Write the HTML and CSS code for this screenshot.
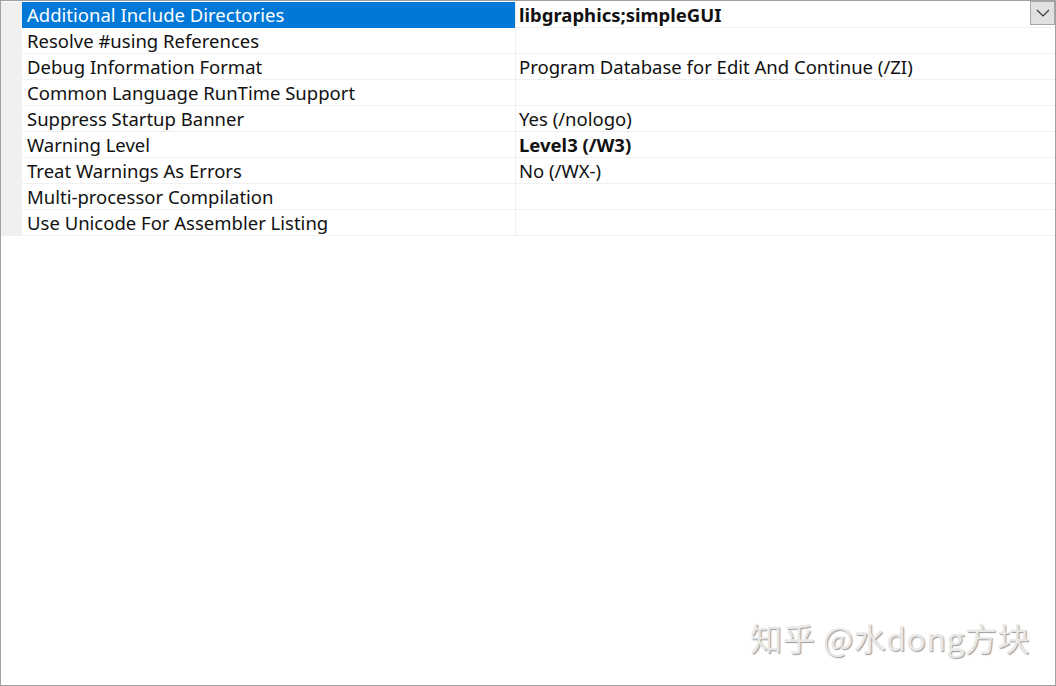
FILE: index.html
```html
<!DOCTYPE html>
<html>
<head>
<meta charset="utf-8">
<link rel="stylesheet" href="styles.css">
</head>
<body>
<div class="frame">
  <div class="grid">
    <div class="row selected">
      <div class="gutter"></div>
      <div class="name">Additional Include Directories</div>
      <div class="value bold with-btn"><span>libgraphics;simpleGUI</span>
        <span class="dd"><svg width="14" height="8" viewBox="0 0 14 8"><path d="M1 1 L7 7 L13 1" fill="none" stroke="#333" stroke-width="1.1"/></svg></span>
      </div>
    </div>
    <div class="row"><div class="gutter"></div><div class="name">Resolve #using References</div><div class="value"></div></div>
    <div class="row"><div class="gutter"></div><div class="name">Debug Information Format</div><div class="value">Program Database for Edit And Continue (/ZI)</div></div>
    <div class="row"><div class="gutter"></div><div class="name">Common Language RunTime Support</div><div class="value"></div></div>
    <div class="row"><div class="gutter"></div><div class="name">Suppress Startup Banner</div><div class="value">Yes (/nologo)</div></div>
    <div class="row"><div class="gutter"></div><div class="name">Warning Level</div><div class="value bold">Level3 (/W3)</div></div>
    <div class="row"><div class="gutter"></div><div class="name">Treat Warnings As Errors</div><div class="value">No (/WX-)</div></div>
    <div class="row"><div class="gutter"></div><div class="name">Multi-processor Compilation</div><div class="value"></div></div>
    <div class="row"><div class="gutter"></div><div class="name">Use Unicode For Assembler Listing</div><div class="value"></div></div>
  </div>
  <div class="watermark">知乎 @水dong方块</div>
</div>
</body>
</html>
```
FILE: styles.css
```css
html, body {
  margin: 0;
  padding: 0;
  background: #ffffff;
}
.frame {
  position: relative;
  width: 1056px;
  height: 686px;
  box-sizing: border-box;
  border: 1px solid #a0a0a0;
  padding-top: 1px;
  font-family: "Noto Sans", "Noto Sans CJK SC", sans-serif;
  font-size: 18.5px;
  color: #111111;
  overflow: hidden;
}
.grid {
  display: flex;
  flex-direction: column;
}
.row {
  display: grid;
  grid-template-columns: 21px 494px 1fr;
  height: 26px;
  box-sizing: border-box;
  border-bottom: 1px solid #f0f0f0;
}
.gutter {
  background: #f0f0f0;
}
.name {
  padding-left: 5px;
  line-height: 26px;
  white-space: nowrap;
  border-right: 1px solid #f0f0f0;
}
.value {
  padding-left: 3px;
  line-height: 26px;
  white-space: nowrap;
}
.bold {
  font-weight: bold;
}
.selected .name {
  background: #0078d7;
  color: #ffffff;
}
.with-btn {
  display: flex;
  justify-content: space-between;
  align-items: flex-start;
}
.dd {
  width: 25px;
  height: 24px;
  margin-top: -1px;
  box-sizing: border-box;
  border: 1px solid #a8a8a8;
  background: #e1e1e1;
  display: flex;
  align-items: center;
  justify-content: center;
}
.watermark {
  position: absolute;
  right: 25px;
  bottom: 25px;
  font-size: 32px;
  color: #e8e8e8;
  text-shadow: 1px 1px 1px #9a9a9a;
  font-family: "Noto Sans CJK SC", sans-serif;
  letter-spacing: 0.5px;
}
```
